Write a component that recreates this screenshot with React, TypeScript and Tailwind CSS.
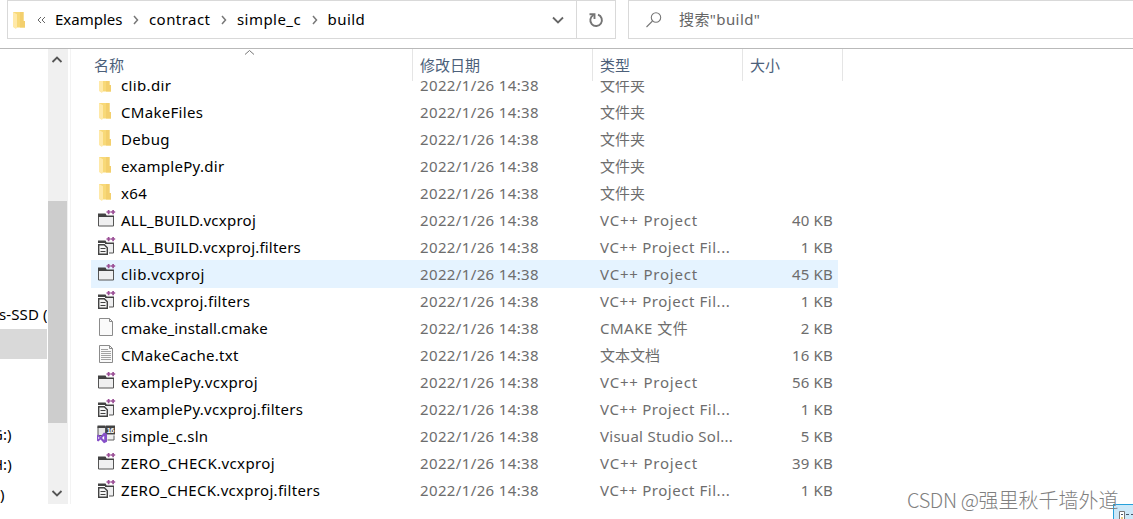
import React from "react";

type Kind = "folder" | "project" | "filters" | "blank" | "text" | "solution";

interface FileRow {
  name: string;
  kind: Kind;
  type: string;
  size?: string;
  tracking: string;
}

const files: FileRow[] = [
  { name: "clib.dir", kind: "folder", type: "文件夹", tracking: "tracking-[0.35px]" },
  { name: "CMakeFiles", kind: "folder", type: "文件夹", tracking: "tracking-[0.3px]" },
  { name: "Debug", kind: "folder", type: "文件夹", tracking: "tracking-[0.35px]" },
  { name: "examplePy.dir", kind: "folder", type: "文件夹", tracking: "tracking-[0.3px]" },
  { name: "x64", kind: "folder", type: "文件夹", tracking: "tracking-[0.35px]" },
  { name: "ALL_BUILD.vcxproj", kind: "project", type: "VC++ Project", size: "40 KB", tracking: "tracking-[0.25px]" },
  { name: "ALL_BUILD.vcxproj.filters", kind: "filters", type: "VC++ Project Fil...", size: "1 KB", tracking: "tracking-[0.2px]" },
  { name: "clib.vcxproj", kind: "project", type: "VC++ Project", size: "45 KB", tracking: "tracking-[0.4px]" },
  { name: "clib.vcxproj.filters", kind: "filters", type: "VC++ Project Fil...", size: "1 KB", tracking: "tracking-[0.3px]" },
  { name: "cmake_install.cmake", kind: "blank", type: "CMAKE 文件", size: "2 KB", tracking: "tracking-[0.1px]" },
  { name: "CMakeCache.txt", kind: "text", type: "文本文档", size: "16 KB", tracking: "tracking-[0.3px]" },
  { name: "examplePy.vcxproj", kind: "project", type: "VC++ Project", size: "56 KB", tracking: "tracking-[0.35px]" },
  { name: "examplePy.vcxproj.filters", kind: "filters", type: "VC++ Project Fil...", size: "1 KB", tracking: "tracking-[0.28px]" },
  { name: "simple_c.sln", kind: "solution", type: "Visual Studio Sol...", size: "5 KB", tracking: "tracking-[0.2px]" },
  { name: "ZERO_CHECK.vcxproj", kind: "project", type: "VC++ Project", size: "39 KB", tracking: "tracking-[0.38px]" },
  { name: "ZERO_CHECK.vcxproj.filters", kind: "filters", type: "VC++ Project Fil...", size: "1 KB", tracking: "tracking-[0.3px]" },
];

const typeTracking: Record<string, string> = {
  "VC++ Project": "tracking-[0.8px]",
  "VC++ Project Fil...": "tracking-[0.55px]",
  "CMAKE 文件": "tracking-[0.5px]",
  "Visual Studio Sol...": "tracking-[0.27px]",
};

const crumbs = ["Examples", "contract", "simple_c", "build"];

function Folder() {
  return (
    <>
      <path d="M3 2h10.500v9H15v6.500H4z" fill="#f8d978" />
      <path d="M10 2h3.500v9H15v6.500h-5z" fill="#f3cf6d" />
      <path d="M3 2l4 2.200V17l-1 2-3-2z" fill="#ffe9a8" />
    </>
  );
}

function PlusPlus() {
  return <path d="M10.500 3h4.200M12.600 1v4.200M15 3h4.200M17.100 1v4.200" stroke="#9b4f96" strokeWidth="1.700" />;
}

function FileIcon({ kind }: { kind: Kind }) {
  return (
    <svg className="mt-[3px] h-5 w-5 shrink-0" viewBox="0 0 20 20" fill="none">
      {kind === "folder" && <Folder />}
      {kind === "project" && (
        <>
          <path d="M2.500 7.500h15v9.500h-15z" fill="#efeff0" stroke="#555" />
          <path d="M2 4.500h7.500l1.200 2H18V8H2z" fill="#424242" />
          <PlusPlus />
        </>
      )}
      {kind === "filters" && (
        <>
          <path d="M9 7.500h8.500V17H13" fill="#efeff0" stroke="#555" />
          <path d="M2 4.500h7.500l1.200 2H18V8h-8L9 7H2z" fill="#424242" />
          <path d="M2.700 8.700h5.600l3 3v6.600H2.700z" fill="#f5f5f5" stroke="#424242" strokeWidth="1.400" />
          <path d="M4.500 12.500h5M4.500 15.500h5" stroke="#424242" />
          <PlusPlus />
        </>
      )}
      {(kind === "blank" || kind === "text") && (
        <>
          <path d="M3.500 1.500h10l3 3v14h-13z" fill="#fafafa" stroke="#8b8b8b" />
          <path d="M13.500 1.500v3h3" stroke="#8b8b8b" />
          {kind === "text" && (
            <path d="M5 5.500h7M5 7.500h10M5 9.500h10M5 11.500h10M5 13.500h10M5 15.500h10" stroke="#a3a3a3" />
          )}
        </>
      )}
      {kind === "solution" && (
        <>
          <path d="M2 1.500h7.500v9H2z" fill="#e6e6e7" stroke="#555" />
          <path d="M1.500 0.500H9.500V3h-8z" fill="#424242" />
          <path d="M10 0.500h9v9h-9z" fill="#424242" />
          <text x="10.700" y="7.800" fontSize="7.500" fontWeight="700" fontFamily="Liberation Sans, sans-serif" fill="#fff" textLength="7.600">
            16
          </text>
          <path d="M11 10h7.500v5H11z" fill="#efeff0" />
          <path d="M11.500 15h6.500V10.500" stroke="#616161" />
          <path
            d="M8 7.500l3 1.300v8l-3 1.400-3.400-3.600L2.300 16.500 1 15.800v-5.600l1.300-.7 2.300 1.900zM8.200 10.800L6 12.900l2.200 2zM2.300 11.500v2.800L3.600 12.900z"
            fill="#8650c8"
            fillRule="evenodd"
          />
        </>
      )}
    </svg>
  );
}

function Row({ file }: { file: FileRow }) {
  const hovered = file.name === "clib.vcxproj";
  return (
    <div
      className={
        hovered
          ? "-mb-px flex h-7 w-[747px] shrink-0 bg-[#e5f3ff] leading-[29px]"
          : "flex h-[27px] w-[747px] shrink-0 leading-[29px]"
      }
    >
      <div className="flex w-[329px] pl-[5px]">
        <FileIcon kind={file.kind} />
        <span className={`ml-[5px] whitespace-pre text-black ${file.tracking}`}>{file.name}</span>
      </div>
      <span className="w-[180px] tracking-[0.37px] text-[#6d6d6d]">2022/1/26 14:38</span>
      <span className={`w-[150px] whitespace-nowrap text-[#6d6d6d] ${typeTracking[file.type] ?? ""}`}>{file.type}</span>
      <span className="w-[83px] text-right tracking-[0.2px] text-[#6d6d6d]">{file.size}</span>
    </div>
  );
}

function AddressBar() {
  return (
    <header className="flex h-[49px] shrink-0 items-start border-b border-[#b9b9b9] pl-[7px]">
      <div className="flex h-[39px] w-[609px] border border-[#d9d9d9]">
        <div className="flex w-[568px] items-center">
          <svg className="ml-0.5 h-5 w-5" viewBox="0 0 20 20">
            <Folder />
          </svg>
          <svg className="ml-[6px] h-3 w-3" viewBox="0 0 12 12" fill="none" stroke="#666">
            <path d="M5 3L2 6l3 3M9 3L6 6l3 3" />
          </svg>
          {crumbs.map((crumb, i) => (
            <React.Fragment key={crumb}>
              {i > 0 && (
                <svg className="mr-[9px] ml-[8.5px] h-[10px] w-[9px]" viewBox="0 0 9 10" fill="none" stroke="#777" strokeWidth="1.500">
                  <path d="M3 1l3.500 4L3 9" />
                </svg>
              )}
              <span className={i === 0 ? "ml-[7px]" : "tracking-[0.45px]"}>{crumb}</span>
            </React.Fragment>
          ))}
          <svg className="mr-3 ml-auto h-3 w-3" viewBox="0 0 12 12" fill="none" stroke="#666" strokeWidth="1.800">
            <path d="M1 3.500l5 5 5-5" />
          </svg>
        </div>
        <div className="flex flex-1 items-center justify-center border-l border-[#d9d9d9]">
          <svg className="h-4 w-4" viewBox="0 0 16 16" fill="none" stroke="#757575" strokeWidth="1.900">
            <path d="M10 2.700A5.800 5.800 0 1 1 5.500 3" />
            <path d="M1.500 2.300h5V7" />
          </svg>
        </div>
      </div>
      <div className="ml-3 flex h-[39px] flex-1 items-center border border-r-0 border-[#d9d9d9] text-[#666]">
        <svg className="ml-4 h-[18px] w-[18px]" viewBox="0 0 18 18" fill="none" stroke="#777" strokeWidth="1.100">
          <circle cx="11" cy="6.500" r="4.700" />
          <path d="M7.500 10L1.500 16" />
        </svg>
        <span className="ml-4 tracking-[0.4px]">搜索"build"</span>
      </div>
    </header>
  );
}

function Sidebar() {
  return (
    <aside className="flex h-[455px] w-[71px] shrink-0 border-r border-[#f3f3f3] leading-[30px]">
      <div className="w-[47px] overflow-hidden pt-[250px] whitespace-nowrap">
        <div className="h-[30px] -indent-px tracking-[0.1px]">s-SSD (</div>
        <div className="h-[30px] bg-[#d9d9d9]" />
        <div className="mt-[60px] h-[30px] -indent-[8px]">G:)</div>
        <div className="h-[30px] -indent-[8px]">H:)</div>
        <div className="h-[30px]">)</div>
      </div>
      {/* Scrollbar */}
      <div className="ml-px flex w-5 flex-col bg-[#f0f0f0]">
        <svg className="mt-[5px] ml-[3px] h-3 w-3" viewBox="0 0 12 12" fill="none" stroke="#555" strokeWidth="1.800">
          <path d="M1.500 8L6 3.500 10.500 8" />
        </svg>
        <div className="mt-[135px] h-[222px] w-[19px] bg-[#cdcdcd]" />
        <svg className="mt-auto mb-[5px] ml-[3px] h-3 w-3" viewBox="0 0 12 12" fill="none" stroke="#555" strokeWidth="1.800">
          <path d="M1.500 4L6 8.500 10.500 4" />
        </svg>
      </div>
    </aside>
  );
}

function ColumnHeaders() {
  return (
    <div className="relative flex h-8 shrink-0 leading-[33px] text-[#4c607a]">
      <div className="w-[322px] border-r border-[#e5e5e5] pl-[3px]">名称</div>
      <div className="w-[180px] border-r border-[#e5e5e5] pl-[7px]">修改日期</div>
      <div className="w-[150px] border-r border-[#e5e5e5] pl-[7px]">类型</div>
      <div className="w-[100px] border-r border-[#e5e5e5] pl-[7px]">大小</div>
      <svg className="absolute top-0 left-[153px] h-[7px] w-[11px]" viewBox="0 0 11 7" fill="none" stroke="#777">
        <path d="M1 5.500l4.500-4 4.500 4" />
      </svg>
    </div>
  );
}

export default function App() {
  return (
    <div className="relative flex h-[519px] w-[1133px] flex-col overflow-hidden bg-white font-['Noto_Sans','Noto_Sans_CJK_SC',sans-serif] text-[15px] text-black">
      <AddressBar />
      <div className="flex flex-1">
        <Sidebar />
        <main className="pl-5">
          <ColumnHeaders />
          <div className="flex h-[423px] flex-col overflow-hidden">
            <div className="-mt-[10px] flex flex-col">
              {files.map((file) => (
                <Row key={file.name} file={file} />
              ))}
            </div>
          </div>
        </main>
      </div>

      {/* View mode button */}
      <div className="absolute top-[504px] left-[1113px] h-[15px] w-5 border-t border-l border-[#26a0da] bg-[#cce8f8]">
        <svg className="h-[14px] w-[19px]" viewBox="0 0 19 14" fill="none">
          <path d="M5.500 6.500h5v8h-5z" fill="#fff" stroke="#777" />
          <path d="M7 9.500h2M12 9.500h3M17 9.500h2" stroke="#456" />
          <path d="M7 13h2" stroke="#d5a000" />
        </svg>
      </div>
      <div className="absolute top-[485px] left-[907px] font-['Noto_Sans_CJK_SC',sans-serif] text-[20px] leading-[30px] font-light whitespace-nowrap text-[#808080]">
        <span className="tracking-[-0.4px]">CSDN @</span>强里秋千墙外道
      </div>
    </div>
  );
}
